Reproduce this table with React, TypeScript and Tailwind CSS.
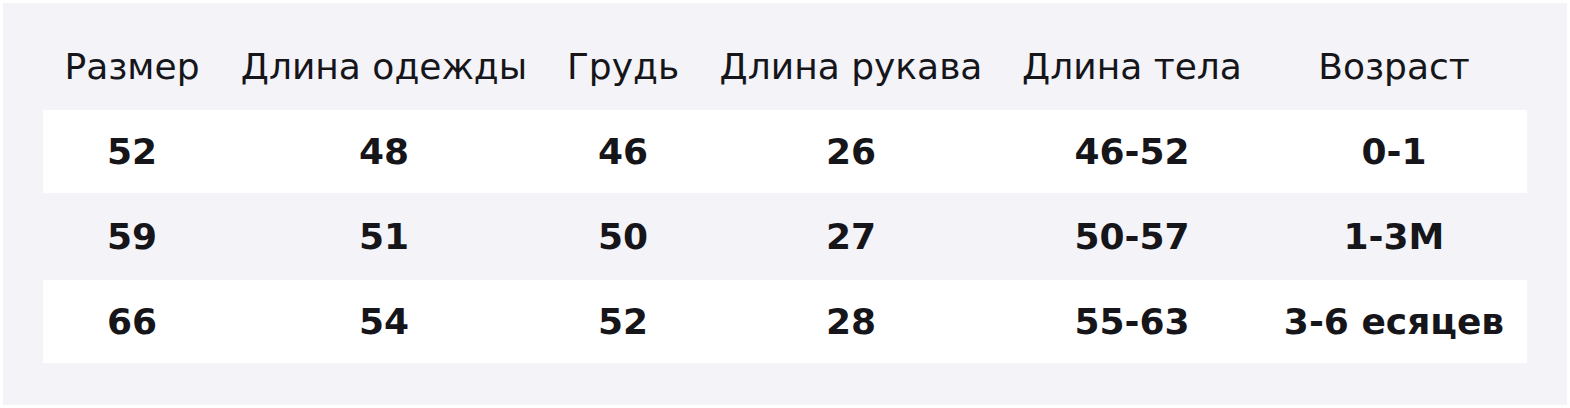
import * as React from "react";

const headers = ["Размер", "Длина одежды", "Грудь", "Длина рукава", "Длина тела", "Возраст"];

const rows = [
  { cells: ["52", "48", "46", "26", "46-52", "0-1"], h: "h-[83px]", bg: "bg-white" },
  { cells: ["59", "51", "50", "27", "50-57", "1-3M"], h: "h-[87px]", bg: "bg-transparent" },
  { cells: ["66", "54", "52", "28", "55-63", "3-6 есяцев"], h: "h-[83px]", bg: "bg-white" },
];

// column widths taken from the reference (auto table layout)
const gridCols = "grid grid-cols-[178px_326px_152px_304px_258px_266px]";

export default function App() {
  return (
    <div className="h-[408px] w-[1570px] bg-white p-[3px] font-['DejaVu_Sans',sans-serif] text-[#15151a]">
      <div className="h-full w-full bg-[#f3f3f8] px-[40px] pt-[40px]">
        <div className={`${gridCols} h-[67px]`}>
          {headers.map((h) => (
            <div key={h} className="pt-[3px] text-center text-[36px] leading-[42px] whitespace-nowrap">
              {h}
            </div>
          ))}
        </div>

        {rows.map((row, i) => (
          <div key={i} className={`${gridCols} ${row.h} ${row.bg}`}>
            {row.cells.map((c, j) => (
              <div
                key={j}
                className="flex items-center justify-center text-[36px] font-bold leading-[42px] whitespace-nowrap"
              >
                {c}
              </div>
            ))}
          </div>
        ))}
      </div>
    </div>
  );
}
